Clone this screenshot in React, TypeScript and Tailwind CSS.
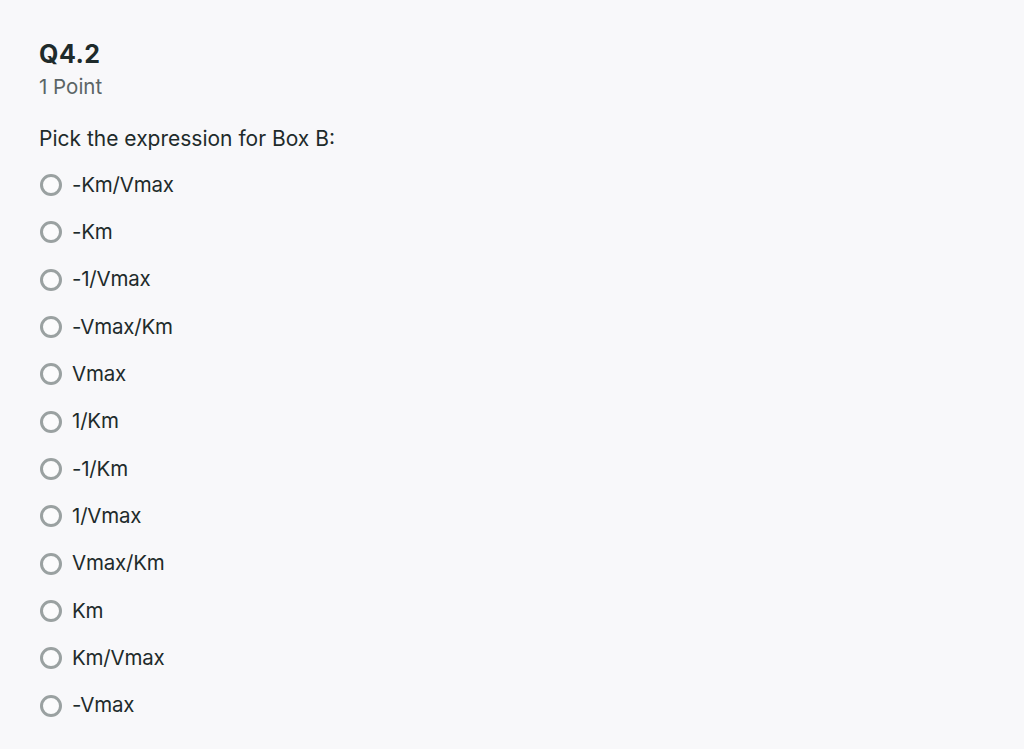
import React from "react";

const options = [
  "-Km/Vmax",
  "-Km",
  "-1/Vmax",
  "-Vmax/Km",
  "Vmax",
  "1/Km",
  "-1/Km",
  "1/Vmax",
  "Vmax/Km",
  "Km",
  "Km/Vmax",
  "-Vmax",
];

export default function App() {
  return (
    <div
      className="min-h-[749px] w-full bg-[#f8f8fa] px-[39px] pt-[39px] text-[#1e2b2b]"
      style={{ fontFamily: "Inter, 'Open Sans', sans-serif" }}
    >
      <div className="text-[25px] font-bold leading-[30px] tracking-[0.5px]">Q4.2</div>
      <div className="mt-[6px] text-[20.5px] leading-[24px] text-[#5b6566]">1 Point</div>
      <div className="mt-[28px] text-[21px] leading-[24px]">Pick the expression for Box B:</div>
      <div className="mt-[10px] flex flex-col">
        {options.map((o) => (
          <label key={o} className="flex h-[47.33px] items-center gap-[10px]">
            <span className="mt-[1px] ml-[1px] block h-[22px] w-[22px] shrink-0 rounded-full border-[3px] border-[#9aa1a1] bg-[#fbfbfc]" />
            <span className="text-[20.5px] leading-[24px] tracking-[-0.2px]">{o}</span>
          </label>
        ))}
      </div>
    </div>
  );
}
